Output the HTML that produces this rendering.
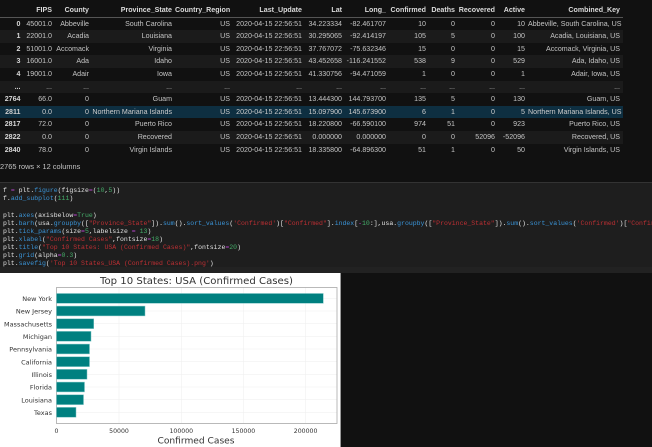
<!DOCTYPE html>
<html><head><meta charset="utf-8"><style>
html,body{margin:0;padding:0;width:652px;height:447px;overflow:hidden;background:#111}
#t{position:absolute;left:0;top:4px;border-collapse:collapse;table-layout:fixed;width:623px;font:7.1px/12.6px "Liberation Sans",sans-serif;color:#c4c4c4;filter:blur(.35px)}
#t td,#t th{padding:0 3px 0 0;text-align:right;height:12.6px;white-space:nowrap;overflow:visible}
#t th{color:#dadada;font-weight:bold}
#t thead tr{border-bottom:1px solid #555}
#t td:first-child{font-weight:bold;color:#d6d6d6}
#t tr.o td{background:#1b1b1b}
#t tr.h td{background:#0e2f41;color:#cccccc}
#n{position:absolute;left:0;top:161.5px;font:7.4px "Liberation Sans",sans-serif;color:#c4c4c4;filter:blur(.3px)}
#c{position:absolute;left:0;top:182px;width:652px;height:85px;background:#1e1e1e;border-top:1px solid #333;box-sizing:border-box}
#l{position:absolute;left:0;top:267px;width:652px;height:6px;background:#222}
#code{position:absolute;left:3px;top:187.2px;margin:0;font:6.5px/8.12px "Liberation Mono",monospace;color:#e2e2e2;white-space:pre;width:649px;overflow:hidden;filter:blur(.25px)}
.f{color:#3a93d6}.s{color:#bd2f33}.d{color:#45ad6a}.p{color:#b544c9}
#ch{position:absolute;left:0;top:273px;filter:blur(.35px)}
</style></head><body>
<table id="t">
<colgroup><col style="width:23.5px"><col style="width:31.5px"><col style="width:37px"><col style="width:83px"><col style="width:58px"><col style="width:72px"><col style="width:40px"><col style="width:44px"><col style="width:40px"><col style="width:29px"><col style="width:40px"><col style="width:30px"><col style="width:95px"></colgroup>
<thead><tr><th></th><th>FIPS</th><th>County</th><th>Province_State</th><th>Country_Region</th><th>Last_Update</th><th>Lat</th><th>Long_</th><th>Confirmed</th><th>Deaths</th><th>Recovered</th><th>Active</th><th>Combined_Key</th></tr></thead>
<tbody>
<tr><td>0</td><td>45001.0</td><td>Abbeville</td><td>South Carolina</td><td>US</td><td>2020-04-15 22:56:51</td><td>34.223334</td><td>-82.461707</td><td>10</td><td>0</td><td>0</td><td>10</td><td>Abbeville, South Carolina, US</td></tr>
<tr class="o"><td>1</td><td>22001.0</td><td>Acadia</td><td>Louisiana</td><td>US</td><td>2020-04-15 22:56:51</td><td>30.295065</td><td>-92.414197</td><td>105</td><td>5</td><td>0</td><td>100</td><td>Acadia, Louisiana, US</td></tr>
<tr><td>2</td><td>51001.0</td><td>Accomack</td><td>Virginia</td><td>US</td><td>2020-04-15 22:56:51</td><td>37.767072</td><td>-75.632346</td><td>15</td><td>0</td><td>0</td><td>15</td><td>Accomack, Virginia, US</td></tr>
<tr class="o"><td>3</td><td>16001.0</td><td>Ada</td><td>Idaho</td><td>US</td><td>2020-04-15 22:56:51</td><td>43.452658</td><td>-116.241552</td><td>538</td><td>9</td><td>0</td><td>529</td><td>Ada, Idaho, US</td></tr>
<tr><td>4</td><td>19001.0</td><td>Adair</td><td>Iowa</td><td>US</td><td>2020-04-15 22:56:51</td><td>41.330756</td><td>-94.471059</td><td>1</td><td>0</td><td>0</td><td>1</td><td>Adair, Iowa, US</td></tr>
<tr class="o"><td>...</td><td>...</td><td>...</td><td>...</td><td>...</td><td>...</td><td>...</td><td>...</td><td>...</td><td>...</td><td>...</td><td>...</td><td>...</td></tr>
<tr><td>2764</td><td>66.0</td><td>0</td><td>Guam</td><td>US</td><td>2020-04-15 22:56:51</td><td>13.444300</td><td>144.793700</td><td>135</td><td>5</td><td>0</td><td>130</td><td>Guam, US</td></tr>
<tr class="h"><td>2811</td><td>0.0</td><td>0</td><td>Northern Mariana Islands</td><td>US</td><td>2020-04-15 22:56:51</td><td>15.097900</td><td>145.673900</td><td>6</td><td>1</td><td>0</td><td>5</td><td>Northern Mariana Islands, US</td></tr>
<tr><td>2817</td><td>72.0</td><td>0</td><td>Puerto Rico</td><td>US</td><td>2020-04-15 22:56:51</td><td>18.220800</td><td>-66.590100</td><td>974</td><td>51</td><td>0</td><td>923</td><td>Puerto Rico, US</td></tr>
<tr class="o"><td>2822</td><td>0.0</td><td>0</td><td>Recovered</td><td>US</td><td>2020-04-15 22:56:51</td><td>0.000000</td><td>0.000000</td><td>0</td><td>0</td><td>52096</td><td>-52096</td><td>Recovered, US</td></tr>
<tr><td>2840</td><td>78.0</td><td>0</td><td>Virgin Islands</td><td>US</td><td>2020-04-15 22:56:51</td><td>18.335800</td><td>-64.896300</td><td>51</td><td>1</td><td>0</td><td>50</td><td>Virgin Islands, US</td></tr>
</tbody></table>
<div id="n">2765 rows × 12 columns</div>
<div id="c"></div><div id="l"></div>
<pre id="code">f <span class="p">=</span> plt.<span class="f">figure</span>(figsize<span class="p">=</span>(<span class="d">10</span>,<span class="d">5</span>))
f.<span class="f">add_subplot</span>(<span class="d">111</span>)

plt.<span class="f">axes</span>(axisbelow<span class="p">=</span><span class="d">True</span>)
plt.<span class="f">barh</span>(usa.<span class="f">groupby</span>([<span class="s">"Province_State"</span>]).<span class="f">sum</span>().<span class="f">sort_values</span>(<span class="s">'Confirmed'</span>)[<span class="s">"Confirmed"</span>].<span class="f">index</span>[<span class="p">-</span><span class="d">10</span>:],usa.<span class="f">groupby</span>([<span class="s">"Province_State"</span>]).<span class="f">sum</span>().<span class="f">sort_values</span>(<span class="s">'Confirmed'</span>)[<span class="s">"Confirmed"</span>]
plt.<span class="f">tick_params</span>(size<span class="p">=</span><span class="d">5</span>,labelsize <span class="p">=</span> <span class="d">13</span>)
plt.<span class="f">xlabel</span>(<span class="s">"Confirmed Cases"</span>,fontsize<span class="p">=</span><span class="d">18</span>)
plt.<span class="f">title</span>(<span class="s">"Top 10 States: USA (Confirmed Cases)"</span>,fontsize<span class="p">=</span><span class="d">20</span>)
plt.<span class="f">grid</span>(alpha<span class="p">=</span><span class="d">0.3</span>)
plt.<span class="f">savefig</span>(<span class="s">'Top 10 States_USA (Confirmed Cases).png'</span>)</pre>
<svg id="ch" width="341" height="174" viewBox="0 273 341 174" font-family="'DejaVu Sans',sans-serif">
<rect x="0" y="273" width="340" height="174" fill="#fff"/>
<rect x="340" y="273" width="1" height="174" fill="#999"/>
<g stroke="#f0f0f0" stroke-width=".6">
<path d="M119 287.5V423M181.3 287.5V423M243.4 287.5V423M305.6 287.5V423"/>
<path d="M56.5 298.5H337M56.5 311H337M56.5 323.7H337M56.5 336.3H337M56.5 349H337M56.5 361.7H337M56.5 374.3H337M56.5 387H337M56.5 399.7H337M56.5 412.3H337"/>
</g>
<rect x="56.5" y="287.5" width="280.5" height="136" fill="none" stroke="#a8a8a8" stroke-width=".8"/>
<g fill="#008080" stroke="#7cc4c4" stroke-width=".5">
<rect x="56.5" y="293.5" width="266.8" height="9.8"/>
<rect x="56.5" y="306.1" width="88.5" height="9.8"/>
<rect x="56.5" y="318.8" width="37.2" height="9.8"/>
<rect x="56.5" y="331.4" width="34.5" height="9.8"/>
<rect x="56.5" y="344.1" width="33" height="9.8"/>
<rect x="56.5" y="356.8" width="33" height="9.8"/>
<rect x="56.5" y="369.4" width="30.5" height="9.8"/>
<rect x="56.5" y="382.1" width="28" height="9.8"/>
<rect x="56.5" y="394.8" width="27" height="9.8"/>
<rect x="56.5" y="407.4" width="19.5" height="9.8"/>
</g>
<g fill="#333" font-size="6.5" text-anchor="end">
<text x="52" y="301">New York</text>
<text x="52" y="313.6">New Jersey</text>
<text x="52" y="326.3">Massachusetts</text>
<text x="52" y="338.9">Michigan</text>
<text x="52" y="351.6">Pennsylvania</text>
<text x="52" y="364.3">California</text>
<text x="52" y="376.9">Illinois</text>
<text x="52" y="389.6">Florida</text>
<text x="52" y="402.3">Louisiana</text>
<text x="52" y="414.9">Texas</text>
</g>
<g fill="#333" font-size="6.2" text-anchor="middle">
<text x="56.5" y="433">0</text>
<text x="119" y="433">50000</text>
<text x="181.3" y="433">100000</text>
<text x="243.4" y="433">150000</text>
<text x="305.6" y="433">200000</text>
</g>
<text x="196.5" y="284" font-size="9.6" fill="#333" text-anchor="middle" textLength="193" lengthAdjust="spacingAndGlyphs">Top 10 States: USA (Confirmed Cases)</text>
<text x="196" y="443.5" font-size="8.7" fill="#333" text-anchor="middle" textLength="77" lengthAdjust="spacingAndGlyphs">Confirmed Cases</text>
</svg>
</body></html>
